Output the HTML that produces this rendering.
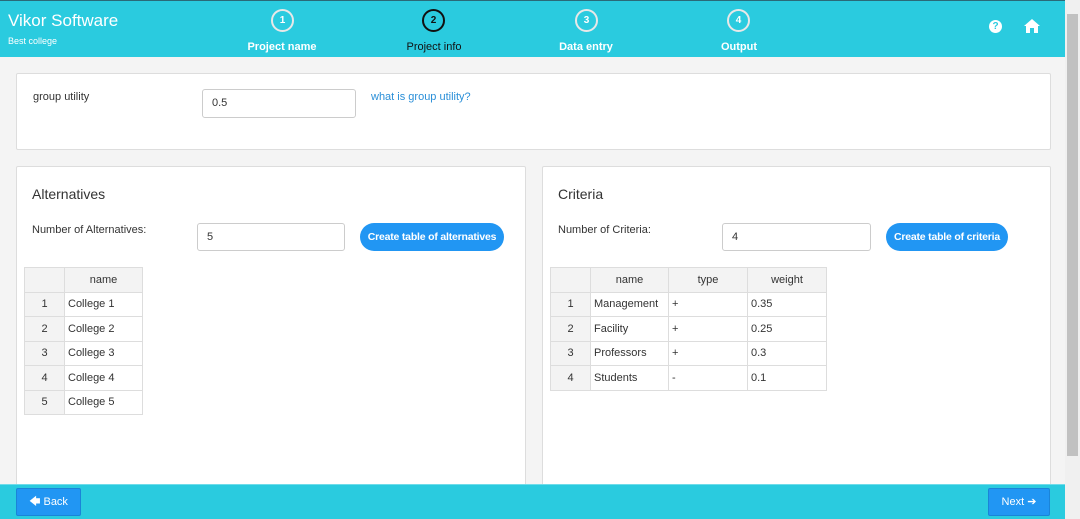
<!DOCTYPE html>
<html><head><style>
*{box-sizing:border-box;margin:0;padding:0}
body{width:1080px;height:519px;overflow:hidden;background:#f4f4f4;font-family:"Liberation Sans",Arial,sans-serif;color:#333;position:relative;font-size:11px}
.abs{position:absolute}
.hdr{left:0;top:0;width:1065px;height:57px;background:#2acbdf;border-top:1px solid #2a6a78}
.circ{width:23px;height:23px;border:2px solid #e8e8e8;border-radius:50%;color:#fff;font-weight:bold;font-size:10px;text-align:center;line-height:20px}
.lbl{color:#fff;font-weight:bold;font-size:11px;text-align:center;width:120px}
.card{background:#fff;border:1px solid #ddd;border-radius:2px}
.inp{background:#fff;border:1px solid #ccc;border-radius:3px;padding-left:9px;font-size:11px;line-height:26px;color:#333}
.btn{background:#2196f3;color:#fff;border-radius:14px;font-size:10.5px;font-weight:bold;letter-spacing:-0.2px;text-align:center;line-height:28px}
table{border-collapse:collapse;font-size:11px;color:#333}
td,th{border:1px solid #ddd;height:24.5px;padding:0 3px;font-weight:normal}
th{background:#f3f3f3;text-align:center}
td.i{background:#f3f3f3;text-align:center}
.ftr{left:0;top:484px;width:1065px;height:35px;background:#2acbdf;border-top:1px solid #6fdcea}
.fb{background:#2196f3;color:#fff;font-size:11px;border-radius:2px;border:1px solid #1a84d8;line-height:26px;text-align:center}
</style></head><body>
<div class="abs hdr"></div>
<div class="abs" style="left:8px;top:11px;color:#fff;font-size:17px">Vikor Software</div>
<div class="abs" style="left:8px;top:36px;color:#fff;font-size:9px">Best college</div>
<div class="abs circ" style="left:271px;top:9px">1</div>
<div class="abs circ" style="left:422px;top:9px;border-color:#111;color:#111">2</div>
<div class="abs circ" style="left:575px;top:9px">3</div>
<div class="abs circ" style="left:727px;top:9px">4</div>
<div class="abs lbl" style="left:222px;top:41px">Project name</div>
<div class="abs lbl" style="left:374px;top:41px;color:#111;font-weight:normal">Project info</div>
<div class="abs lbl" style="left:526px;top:41px">Data entry</div>
<div class="abs lbl" style="left:679px;top:41px">Output</div>
<div class="abs" style="left:989px;top:20px;width:13px;height:13px;border-radius:50%;background:#fff;color:#2acbdf;font-size:10px;font-weight:bold;text-align:center;line-height:13px">?</div>
<svg class="abs" style="left:1024px;top:19px" width="16" height="14" viewBox="0 0 16 14"><path d="M8 0L0 7h2v7h12V7h2z" fill="#fff"/><rect x="6" y="9" width="4" height="5" fill="#2acbdf"/></svg>
<div class="abs" style="left:1065px;top:0;width:15px;height:519px;background:#f0f0f0"></div>
<div class="abs" style="left:1067px;top:14px;width:11px;height:442px;background:#c1c1c1"></div>

<div class="abs card" style="left:16px;top:73px;width:1035px;height:77px"></div>
<div class="abs" style="left:33px;top:91px">group utility</div>
<div class="abs inp" style="left:202px;top:89px;width:154px;height:29px">0.5</div>
<div class="abs" style="left:371px;top:91px;color:#2a8fd8">what is group utility?</div>

<div class="abs card" style="left:16px;top:166px;width:510px;height:330px"></div>
<div class="abs" style="left:32px;top:186px;font-size:14px;color:#333">Alternatives</div>
<div class="abs" style="left:32px;top:224px">Number of Alternatives:</div>
<div class="abs inp" style="left:197px;top:223px;width:148px;height:28px">5</div>
<div class="abs btn" style="left:360px;top:223px;width:144px;height:28px">Create table of alternatives</div>
<table class="abs" style="left:24px;top:267px">
<tr><th style="width:40px"></th><th style="width:78px">name</th></tr>
<tr><td class="i">1</td><td>College 1</td></tr>
<tr><td class="i">2</td><td>College 2</td></tr>
<tr><td class="i">3</td><td>College 3</td></tr>
<tr><td class="i">4</td><td>College 4</td></tr>
<tr><td class="i">5</td><td>College 5</td></tr>
</table>

<div class="abs card" style="left:542px;top:166px;width:509px;height:330px"></div>
<div class="abs" style="left:558px;top:186px;font-size:14px;color:#333">Criteria</div>
<div class="abs" style="left:558px;top:224px">Number of Criteria:</div>
<div class="abs inp" style="left:722px;top:223px;width:149px;height:28px">4</div>
<div class="abs btn" style="left:886px;top:223px;width:122px;height:28px">Create table of criteria</div>
<table class="abs" style="left:550px;top:267px">
<tr><th style="width:40px"></th><th style="width:78px">name</th><th style="width:79px">type</th><th style="width:79px">weight</th></tr>
<tr><td class="i">1</td><td>Management</td><td>+</td><td>0.35</td></tr>
<tr><td class="i">2</td><td>Facility</td><td>+</td><td>0.25</td></tr>
<tr><td class="i">3</td><td>Professors</td><td>+</td><td>0.3</td></tr>
<tr><td class="i">4</td><td>Students</td><td>-</td><td>0.1</td></tr>
</table>

<div class="abs ftr"></div>
<div class="abs fb" style="left:16px;top:488px;width:65px;height:28px">&#x1F844; Back</div>
<div class="abs fb" style="left:988px;top:488px;width:62px;height:28px">Next &#x2794;</div>
</body></html>
